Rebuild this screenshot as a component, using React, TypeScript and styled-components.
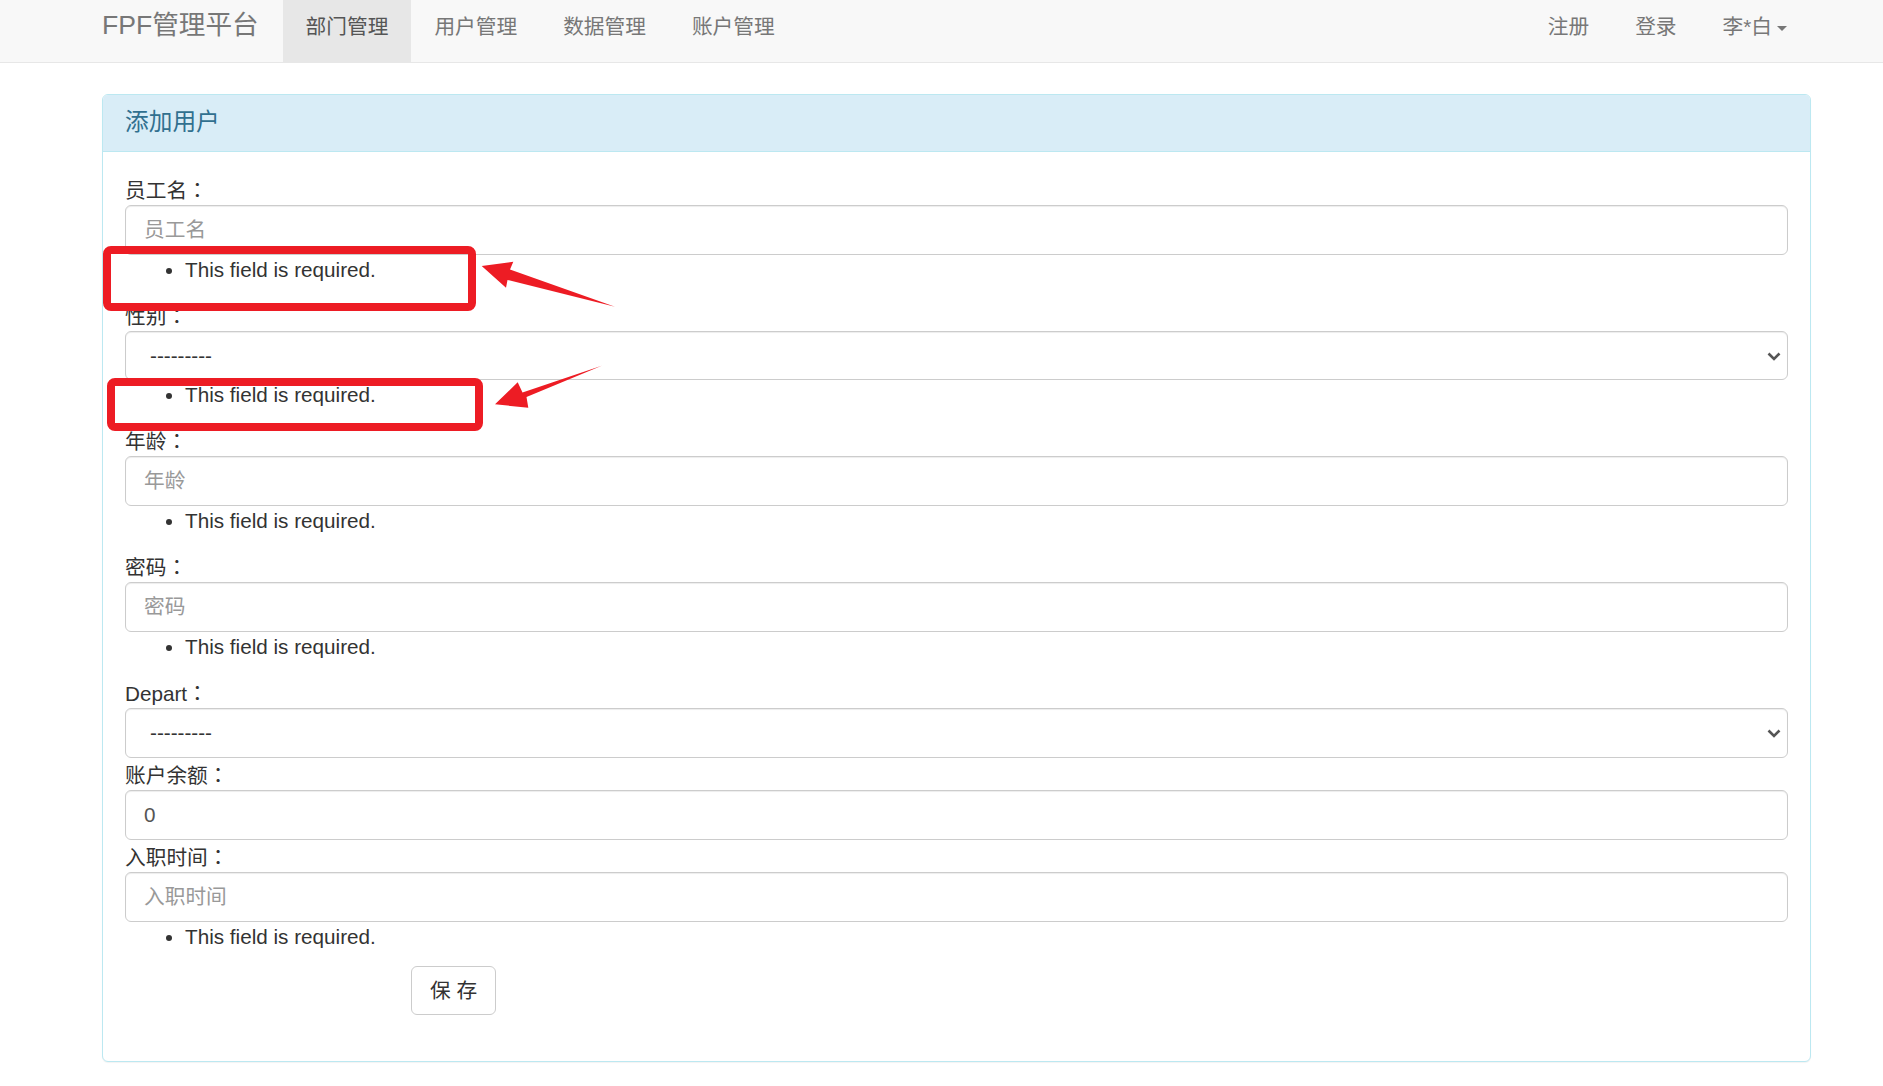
import React from 'react';
import styled, { createGlobalStyle } from 'styled-components';

const GlobalStyle = createGlobalStyle`
  html, body {
    margin: 0;
    padding: 0;
    background: #fff;
  }
  body {
    font-family: "Liberation Sans", "Noto Sans CJK SC", sans-serif;
    font-size: 20.7px;
    line-height: 1.42857;
    color: #333;
  }
  * {
    box-sizing: border-box;
  }
`;

const Page = styled.div`
  position: relative;
  width: 1883px;
  min-height: 1086px;
`;

const Navbar = styled.nav`
  display: flex;
  align-items: stretch;
  height: 63px;
  padding: 0 73px 0 80px;
  background: #f8f8f8;
  border-bottom: 1px solid #e7e7e7;
`;

const Brand = styled.a`
  display: flex;
  align-items: center;
  padding: 0 22px 10px;
  margin-right: 2px;
  font-size: 26.6px;
  color: #777;
  text-decoration: none;
  white-space: nowrap;
`;

const NavList = styled.ul<{ $right?: boolean }>`
  display: flex;
  margin: 0;
  margin-left: ${p => (p.$right ? 'auto' : '0')};
  padding: 0;
  list-style: none;
`;

const NavLink = styled.a<{ $active?: boolean }>`
  display: flex;
  align-items: center;
  height: 100%;
  padding: 0 23px 8px;
  color: ${p => (p.$active ? '#555' : '#777')};
  background: ${p => (p.$active ? '#e7e7e7' : 'transparent')};
  text-decoration: none;
  white-space: nowrap;
`;

const Caret = styled.span`
  display: inline-block;
  width: 0;
  height: 0;
  margin-left: 5px;
  margin-top: 2px;
  border-top: 5px solid #777;
  border-left: 5px solid transparent;
  border-right: 5px solid transparent;
`;

const Main = styled.main`
  padding: 31px 72px 30px 102px;
`;

const Panel = styled.section`
  background: #fff;
  border: 1px solid #bce8f1;
  border-radius: 6px;
  box-shadow: 0 1px 1px rgba(0, 0, 0, 0.05);
`;

const PanelHeading = styled.div`
  display: flex;
  align-items: center;
  height: 57px;
  padding: 0 22px;
  font-size: 23.7px;
  color: #31708f;
  background: #d9edf7;
  border-bottom: 1px solid #bce8f1;
  border-radius: 5px 5px 0 0;
`;

const PanelBody = styled.div`
  padding: 21px 22px 22px;
`;

const FieldLabel = styled.label`
  display: block;
  height: 32px;
  line-height: 32px;
  color: #333;
`;

/* the label suffix colon sits centred in its em box, as in the original */
const Suffix = styled.span`
  font-family: "Noto Sans CJK JP", sans-serif;
`;

const TextInput = styled.input`
  display: block;
  width: 100%;
  height: 50px;
  padding: 0 18px;
  font: inherit;
  color: #555;
  background: #fff;
  border: 1px solid #ccc;
  border-radius: 6px;
  box-shadow: inset 0 1px 1px rgba(0, 0, 0, 0.075);
  outline: none;

  &::placeholder {
    color: #999;
  }
`;

const SelectWrap = styled.div`
  position: relative;
`;

const Select = styled.select`
  display: block;
  width: 100%;
  height: 49.5px;
  padding: 0 40px 0 24px;
  font: inherit;
  color: #333;
  background: #fff;
  border: 1px solid #ccc;
  border-radius: 6px;
  box-shadow: inset 0 1px 1px rgba(0, 0, 0, 0.075);
  appearance: none;
  outline: none;
`;

const Chevron = styled.svg`
  position: absolute;
  right: 7px;
  top: 50%;
  width: 14px;
  height: 9px;
  margin-top: -4px;
  pointer-events: none;
`;

const ErrorList = styled.ul`
  margin: 0 0 14.4px;
  padding-left: 60px;
  line-height: 29.6px;
  color: #333;
`;

const ButtonRow = styled.div`
  padding-left: 286px;
  margin-top: 1px;
  margin-bottom: 24px;
`;

const Button = styled.button`
  height: 49px;
  padding: 0 18px;
  font: inherit;
  color: #333;
  background: #fff;
  border: 1px solid #ccc;
  border-radius: 6px;
  cursor: pointer;
`;

const Annotations = styled.svg`
  position: absolute;
  top: 0;
  left: 0;
  width: 1883px;
  height: 1086px;
  pointer-events: none;
`;

const RED = '#ed1c24';

type Field = {
  label: string;
  kind: 'text' | 'select';
  placeholder?: string;
  value?: string;
  error?: boolean;
};

const fields: Field[] = [
  { label: '员工名', kind: 'text', placeholder: '员工名', error: true },
  { label: '性别', kind: 'select', error: true },
  { label: '年龄', kind: 'text', placeholder: '年龄', error: true },
  { label: '密码', kind: 'text', placeholder: '密码', error: true },
  { label: 'Depart', kind: 'select' },
  { label: '账户余额', kind: 'text', value: '0' },
  { label: '入职时间', kind: 'text', placeholder: '入职时间', error: true },
];

const FormField = ({ field }: { field: Field }) => (
  <div>
    <FieldLabel>
      {field.label}
      <Suffix>：</Suffix>
    </FieldLabel>
    {field.kind === 'select' ? (
      <SelectWrap>
        <Select defaultValue="">
          <option value="">---------</option>
        </Select>
        <Chevron viewBox="0 0 14 9">
          <path d="M1.5 1.5 L7 7 L12.5 1.5" fill="none" stroke="#555" strokeWidth="2.6" />
        </Chevron>
      </SelectWrap>
    ) : (
      <TextInput placeholder={field.placeholder} defaultValue={field.value} readOnly />
    )}
    {field.error && (
      <ErrorList>
        <li>This field is required.</li>
      </ErrorList>
    )}
  </div>
);

export default function App() {
  return (
    <Page>
      <GlobalStyle />
      <Navbar>
        <Brand href="#">FPF管理平台</Brand>
        <NavList>
          <li><NavLink href="#" $active>部门管理</NavLink></li>
          <li><NavLink href="#">用户管理</NavLink></li>
          <li><NavLink href="#">数据管理</NavLink></li>
          <li><NavLink href="#">账户管理</NavLink></li>
        </NavList>
        <NavList $right>
          <li><NavLink href="#">注册</NavLink></li>
          <li><NavLink href="#">登录</NavLink></li>
          <li><NavLink href="#">李*白<Caret /></NavLink></li>
        </NavList>
      </Navbar>

      <Main>
        <Panel>
          <PanelHeading>添加用户</PanelHeading>
          <PanelBody>
            {fields.map(f => (
              <FormField key={f.label} field={f} />
            ))}
            <ButtonRow>
              <Button type="button">保 存</Button>
            </ButtonRow>
          </PanelBody>
        </Panel>
      </Main>

      {/* red markup drawn over the screenshot */}
      <Annotations viewBox="0 0 1883 1086">
        <rect x="107" y="250" width="365" height="57" rx="4" fill="none" stroke={RED} strokeWidth="8" />
        <rect x="111" y="382" width="368" height="45" rx="4" fill="none" stroke={RED} strokeWidth="8" />
        <polygon
          points="481.7,266 513.3,261.7 510,269.5 615,306.7 507.5,280 506,287.7"
          fill={RED}
        />
        <polygon
          points="495,404.3 517.7,382.3 522.5,392.5 601.7,365.7 526.5,397 528.3,407.7"
          fill={RED}
        />
      </Annotations>
    </Page>
  );
}
